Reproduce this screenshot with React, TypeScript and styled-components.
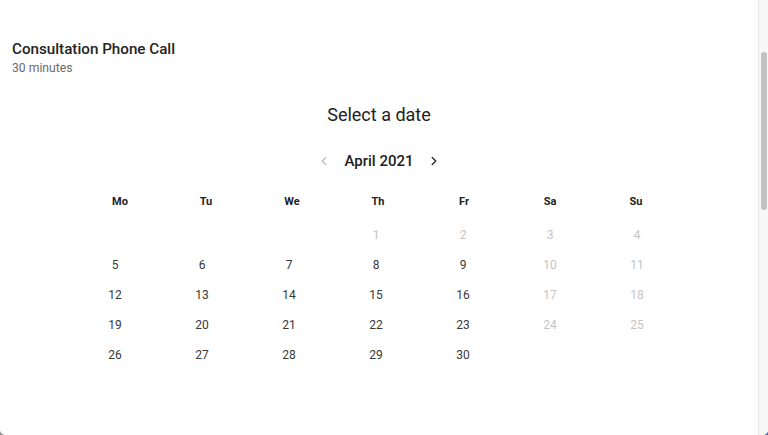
import styled, { createGlobalStyle } from 'styled-components';
import { ChevronLeft, ChevronRight } from 'lucide-react';

const GlobalStyle = createGlobalStyle`
  html, body {
    margin: 0;
    padding: 0;
    background: linear-gradient(90deg, #8f8f8f, #3f5fc6);
  }
  body {
    font-family: Roboto, "Noto Sans", "Liberation Sans", sans-serif;
    -webkit-font-smoothing: antialiased;
  }
`;

const Frame = styled.div`
  display: flex;
  height: 435px;
  background: #fff;
  border-radius: 0 0 5px 5px;
  overflow: hidden;
`;

const Main = styled.main`
  flex: 1;
  padding: 39px 12px 0;
`;

const Title = styled.h1`
  margin: 0;
  font-size: 15.2px;
  line-height: 20px;
  font-weight: 500;
  color: #242424;
`;

const Duration = styled.div`
  margin-top: 1px;
  font-size: 12.2px;
  line-height: 16px;
  color: #6b6b6b;
`;

const Heading = styled.h2`
  margin: 27px 0 0;
  font-size: 18px;
  line-height: 24px;
  font-weight: 400;
  text-align: center;
  color: #222;
`;

const MonthNav = styled.div`
  margin-top: 24px;
  height: 20px;
  display: flex;
  align-items: center;
  justify-content: center;
  gap: 12px;
`;

const NavButton = styled.button<{ $disabled?: boolean }>`
  display: flex;
  align-items: center;
  justify-content: center;
  width: 16px;
  height: 20px;
  padding: 0;
  border: 0;
  background: transparent;
  color: ${(p) => (p.$disabled ? '#bdbdbd' : '#2b2b2b')};
  cursor: ${(p) => (p.$disabled ? 'default' : 'pointer')};
`;

const MonthLabel = styled.span`
  font-size: 15px;
  line-height: 20px;
  font-weight: 500;
  color: #212121;
`;

const WeekHeader = styled.div`
  margin: 24px 0 0 65px;
  width: 602px;
  display: grid;
  grid-template-columns: repeat(7, 1fr);
`;

const WeekDay = styled.div`
  font-size: 11px;
  line-height: 14px;
  font-weight: 700;
  text-align: center;
  color: #222;
`;

const DateGrid = styled.div`
  margin: 11px 0 0 59.5px;
  width: 609px;
  display: grid;
  grid-template-columns: repeat(7, 1fr);
  grid-auto-rows: 30px;
`;

const DayCell = styled.div<{ $off?: boolean }>`
  font-size: 12px;
  line-height: 30px;
  text-align: center;
  color: ${(p) => (p.$off ? '#c4c4c4' : '#383838')};
`;

const ScrollTrack = styled.div`
  width: 9px;
  border-left: 1px solid #e8e8e8;
  background: #f7f7f7;
  display: flex;
  justify-content: center;
`;

const ScrollThumb = styled.div`
  margin-top: 52px;
  width: 6px;
  height: 158px;
  border-radius: 3px;
  background: #c2c2c2;
`;

const weekDays = ['Mo', 'Tu', 'We', 'Th', 'Fr', 'Sa', 'Su'];

// April 2021 starts on a Thursday
const cells: (number | null)[] = [null, null, null];
for (let d = 1; d <= 30; d++) cells.push(d);

const isOff = (day: number, index: number) => day <= 4 || index % 7 >= 5;

const App = () => {
  return (
    <>
      <GlobalStyle />
      <Frame>
        <Main>
          <Title>Consultation Phone Call</Title>
          <Duration>30 minutes</Duration>
          <Heading>Select a date</Heading>
          <MonthNav>
            <NavButton $disabled aria-label='Previous month'>
              <ChevronLeft size={14} strokeWidth={2} />
            </NavButton>
            <MonthLabel>April 2021</MonthLabel>
            <NavButton aria-label='Next month'>
              <ChevronRight size={14} strokeWidth={2.4} />
            </NavButton>
          </MonthNav>
          <WeekHeader>
            {weekDays.map((d) => (
              <WeekDay key={d}>{d}</WeekDay>
            ))}
          </WeekHeader>
          <DateGrid>
            {cells.map((day, i) =>
              day === null ? (
                <DayCell key={`e${i}`} />
              ) : (
                <DayCell key={day} $off={isOff(day, i)}>
                  {day}
                </DayCell>
              )
            )}
          </DateGrid>
        </Main>
        <ScrollTrack>
          <ScrollThumb />
        </ScrollTrack>
      </Frame>
    </>
  );
};

export default App;
